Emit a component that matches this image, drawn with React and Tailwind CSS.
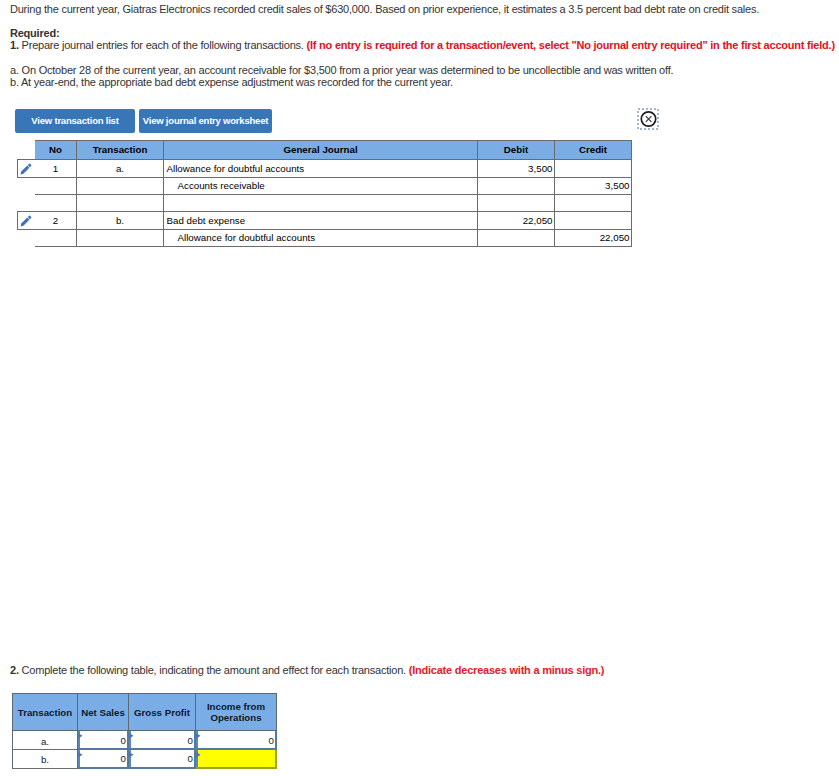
import React from 'react';
import clsx from 'clsx';

const journalRows = [
  { no: '1', transaction: 'a.', account: 'Allowance for doubtful accounts', debit: '3,500', height: 'h-[18px]', editable: true },
  { account: 'Accounts receivable', indent: true, credit: '3,500', height: 'h-[17px]' },
  { height: 'h-[17px]', beforeEntry: true },
  { no: '2', transaction: 'b.', account: 'Bad debt expense', debit: '22,050', height: 'h-[18px]', editable: true },
  { account: 'Allowance for doubtful accounts', indent: true, credit: '22,050', height: 'h-[17px]' },
];

const journalGrid = 'grid grid-cols-[18px_42px_87px_314px_77px_77px]';
const cell = 'flex items-center border-r border-b border-[#6b6b6b]';

function Line({ className, children }) {
  return (
    <p className={clsx('flex h-3 items-center whitespace-nowrap', className)}>
      <span className="whitespace-pre">{children}</span>
    </p>
  );
}

function PencilIcon() {
  return (
    <svg width="12" height="12" viewBox="0 0 12 12" fill="#3b73b5">
      <path d="M0.6 11.4 L1.2 8.6 L7.3 2.6 L9.4 4.7 L3.4 10.8 Z" />
      <path d="M7.8 2.1 L9.1 0.8 Q9.7 0.4 10.2 0.9 L11.1 1.8 Q11.6 2.3 11.1 2.9 L9.9 4.2 Z" />
    </svg>
  );
}

function CloseButton() {
  return (
    <button type="button" className="-mt-px ml-[365px] h-[22px] w-[22px]">
      <svg width="22" height="22" viewBox="0 0 22 22" fill="none">
        <rect x="1" y="1" width="20" height="20" stroke="#9fb6cc" strokeWidth="2" strokeDasharray="2 2" />
        <circle cx="11.5" cy="11" r="7.2" fill="#fff" stroke="#1c1c22" strokeWidth="1.7" />
        <path d="M8.8 8.2 L14.4 13.8 M14.4 8.2 L8.8 13.8" stroke="#34373e" strokeWidth="1.2" />
      </svg>
    </button>
  );
}

function JournalTable() {
  return (
    <div className="ml-[17px] mt-[7px] w-[615px] text-[9.75px] text-black">
      <div className={clsx(journalGrid, 'h-5 font-bold')}>
        <div className="border-b border-[#6b6b6b]" />
        {['No', 'Transaction', 'General Journal', 'Debit', 'Credit'].map((label) => (
          <div key={label} className={clsx(cell, 'justify-center border-t bg-[#7aade6]')}>
            {label}
          </div>
        ))}
      </div>
      {journalRows.map((row, i) => {
        const rowCell = clsx(cell, row.editable ? 'pt-px' : 'pb-px');
        return (
          <div key={i} className={clsx(journalGrid, row.height, 'leading-3')}>
            <div
              className={clsx(
                'flex items-center justify-center border-[#6b6b6b] pr-px',
                row.editable && 'border-b border-l',
                row.beforeEntry && 'border-b'
              )}
            >
              {row.editable && <PencilIcon />}
            </div>
            <div className={clsx(rowCell, 'justify-center')}>{row.no}</div>
            <div className={clsx(rowCell, 'justify-center')}>{row.transaction}</div>
            <div className={clsx(rowCell, row.indent ? 'pl-[13.5px]' : 'pl-[2.5px]')}>{row.account}</div>
            <div className={clsx(rowCell, 'justify-end pr-[1.5px]')}>{row.debit}</div>
            <div className={clsx(rowCell, 'justify-end pr-[1.5px]')}>{row.credit}</div>
          </div>
        );
      })}
    </div>
  );
}

function AmountCell({ value, highlighted }) {
  return (
    <div
      className={clsx(
        'relative flex items-center justify-end border-r-2 border-b-2 pr-px',
        highlighted ? 'border-[#9aa51e] bg-[#ffff00]' : 'border-[#55789f] bg-white'
      )}
    >
      <span className="absolute top-0 left-0 h-full w-0.5 bg-[#5b87bd]" />
      <svg className="absolute top-0.5 left-0" width="5" height="6" viewBox="0 0 5 6" fill="#4778b3">
        <path d="M0 0 L4.5 2.8 L0 5.8 Z" />
      </svg>
      {value}
    </div>
  );
}

function EffectsTable() {
  const columns = 'grid grid-cols-[65px_51px_67px_81px]';
  const heading = 'flex items-center justify-center border-r border-b border-[#5c6874] text-center';
  const label = 'flex items-center justify-center border-r border-b border-[#6b6b6b]';
  return (
    <div className="ml-3 mt-[17px] w-[265px] border-t border-l border-[#5c6874] text-[9.7px] text-[#111827]">
      <div className={clsx(columns, 'h-[37px] bg-[#7aade6] font-bold leading-[11px]')}>
        <div className={heading}>Transaction</div>
        <div className={heading}>Net Sales</div>
        <div className={heading}>Gross Profit</div>
        <div className={heading}>
          Income from
          <br />
          Operations
        </div>
      </div>
      <div className={clsx(columns, 'h-[19px] leading-3 *:pt-[3px]')}>
        <div className={label}>a.</div>
        <AmountCell value="0" />
        <AmountCell value="0" />
        <AmountCell value="0" />
      </div>
      <div className={clsx(columns, 'h-[19px] leading-3 *:pt-px')}>
        <div className={label}>b.</div>
        <AmountCell value="0" />
        <AmountCell value="0" />
        <AmountCell highlighted />
      </div>
    </div>
  );
}

export default function App() {
  return (
    <div className="h-[776px] w-[839px] overflow-hidden bg-white font-['Liberation_Sans',Arial,sans-serif] text-[#333333]">
      <div className="pl-[10px] pt-[3px] text-[11px] leading-3 tracking-[-0.22px]">
        <Line>
          During the current year, Giatras Electronics recorded credit sales of $630,000. Based on prior experience, it estimates a 3.5 percent bad debt rate on credit sales.
        </Line>
        <Line className="mt-3 font-bold">Required:</Line>
        <Line>
          <b>1.</b> Prepare journal entries for each of the following transactions.{' '}
          <b className="text-[#e60f1c]">
            (If no entry is required for a transaction/event, select "No journal entry required" in the first account field.)
          </b>
        </Line>
        <Line className="mt-[13px]">
          a. On October 28 of the current year, an account receivable for $3,500 from a prior year was determined to be uncollectible and was written off.
        </Line>
        <Line>b. At year-end, the appropriate bad debt expense adjustment was recorded for the current year.</Line>
      </div>

      <div className="mt-[21px] flex pl-[15px] text-[9.5px] font-bold tracking-[-0.21px] text-white">
        <button type="button" className="h-6 w-[120px] rounded-[2px] bg-[#3976b8]">
          View transaction list
        </button>
        <button type="button" className="ml-1 h-6 w-[133px] rounded-[2px] bg-[#3976b8]">
          View journal entry worksheet
        </button>
        <CloseButton />
      </div>

      <JournalTable />

      <div className="mt-[417px] pl-[10px] text-[11px] leading-3 tracking-[-0.22px]">
        <Line>
          <b>2.</b> Complete the following table, indicating the amount and effect for each transaction.{' '}
          <b className="text-[#e3202c]">(Indicate decreases with a minus sign.)</b>
        </Line>
      </div>
      <EffectsTable />
    </div>
  );
}
